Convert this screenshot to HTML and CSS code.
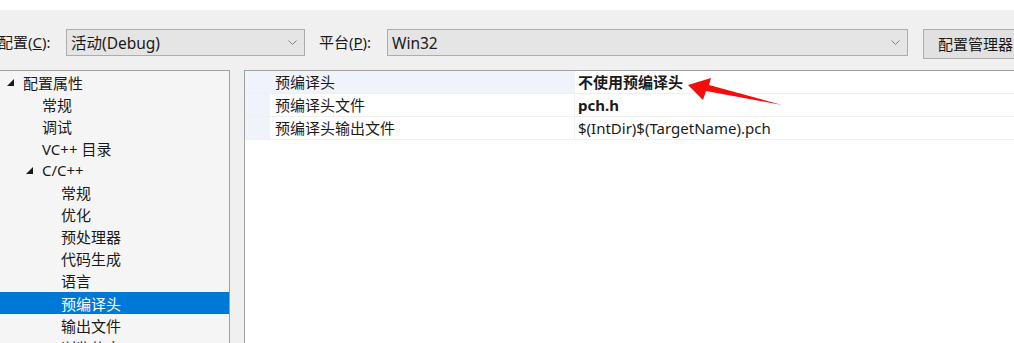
FILE: index.html
```html
<!DOCTYPE html>
<html>
<head>
    <title>属性页</title>
    <link rel="stylesheet" href="styles.css">
</head>
<body>
    <div class="page">
        <div class="top-strip"></div>

        <!-- 配置 / 平台 工具栏 -->
        <div class="toolbar">
            <span class="label label-config">配置(<u>C</u>):</span>
            <div class="combo combo-config">
                <span>活动(Debug)</span>
                <svg class="chevron" width="9" height="5" viewBox="0 0 9 5"><path d="M0.5 0.5 L4.5 4.5 L8.5 0.5" fill="none" stroke="#808080" stroke-width="1"/></svg>
            </div>
            <span class="label label-platform">平台(<u>P</u>):</span>
            <div class="combo combo-platform">
                <span>Win32</span>
                <svg class="chevron" width="9" height="5" viewBox="0 0 9 5"><path d="M0.5 0.5 L4.5 4.5 L8.5 0.5" fill="none" stroke="#808080" stroke-width="1"/></svg>
            </div>
            <div class="button">配置管理器</div>
        </div>

        <div class="main">
            <!-- 左侧树 -->
            <div class="tree">
                <div class="node level1"><span class="tri"></span>配置属性</div>
                <div class="node level2">常规</div>
                <div class="node level2">调试</div>
                <div class="node level2">VC++ 目录</div>
                <div class="node level2 open"><span class="tri"></span>C/C++</div>
                <div class="node level3">常规</div>
                <div class="node level3">优化</div>
                <div class="node level3">预处理器</div>
                <div class="node level3">代码生成</div>
                <div class="node level3">语言</div>
                <div class="node level3 selected">预编译头</div>
                <div class="node level3">输出文件</div>
                <div class="node level3">浏览信息</div>
            </div>

            <!-- 右侧属性表 -->
            <div class="grid">
                <div class="row active">
                    <div class="margin"></div>
                    <div class="name">预编译头</div>
                    <div class="value bold">不使用预编译头</div>
                </div>
                <div class="row">
                    <div class="margin"></div>
                    <div class="name">预编译头文件</div>
                    <div class="value bold">pch.h</div>
                </div>
                <div class="row">
                    <div class="margin"></div>
                    <div class="name">预编译头输出文件</div>
                    <div class="value">$(IntDir)$(TargetName).pch</div>
                </div>
            </div>
        </div>

        <!-- 红色箭头 -->
        <svg class="arrow" width="110" height="40" viewBox="680 72 110 40">
            <path d="M688 85 L711 78 L709 85 L782 105 L706 91 L703 100 Z" fill="#f50d0d"/>
        </svg>
    </div>
</body>
</html>
```

FILE: styles.css
```css
body {
    margin: 0;
    background: #ffffff;
    font-family: "Noto Sans", "Noto Sans CJK SC", sans-serif;
    font-size: 15px;
    color: #1a1a1a;
}

.page {
    position: relative;
    width: 1014px;
    height: 343px;
    overflow: hidden;
    background: #f0f0f0;
}

.top-strip {
    height: 10px;
    background: #ffffff;
}

.toolbar {
    display: flex;
    align-items: flex-start;
    height: 60px;
    padding-top: 19px;
    box-sizing: border-box;
    white-space: nowrap;
}

.toolbar > * {
    flex-shrink: 0;
}

.label {
    height: 27px;
    line-height: 27px;
}

.label-config {
    margin-left: -2px;
    width: 68px;
}

.label-platform {
    margin-left: 14px;
    width: 68px;
}

.combo {
    display: flex;
    align-items: center;
    justify-content: space-between;
    height: 27px;
    box-sizing: border-box;
    border: 1px solid #adadad;
    background: #e5e5e5;
    padding: 0 7px 0 4px;
    font-size: 15.5px;
}

.combo-config {
    width: 239px;
}

.combo-platform {
    width: 521px;
}

.chevron {
    display: block;
}

.button {
    margin-left: 15px;
    height: 30px;
    line-height: 28px;
    box-sizing: border-box;
    border: 1px solid #adadad;
    background: #e1e1e1;
    padding: 0 14px;
    width: 110px;
}

.main {
    display: flex;
    gap: 14px;
    height: 273px;
}

.tree {
    width: 230px;
    flex-shrink: 0;
    box-sizing: border-box;
    border-top: 1px solid #a0a0a0;
    border-right: 1px solid #a0a0a0;
    background: #f5f5f5;
    padding-top: 0;
}

.node {
    display: flex;
    align-items: center;
    height: 22px;
    white-space: nowrap;
}

.level1 {
    padding-left: 23px;
}

.level2 {
    padding-left: 42px;
}

.level3 {
    padding-left: 61px;
}

.tri {
    width: 0;
    height: 0;
    border-left: 7px solid transparent;
    border-bottom: 7px solid #1a1a1a;
    margin-left: -16px;
    margin-right: 9px;
}

.selected {
    background: #0078d7;
    color: #ffffff;
    margin-top: 1px;
}

.grid {
    flex: 1;
    border-top: 1px solid #a0a0a0;
    border-left: 1px solid #a0a0a0;
    background: #ffffff;
}

.row {
    display: flex;
    height: 23px;
    box-sizing: border-box;
    border-bottom: 1px solid #f0f0f0;
    white-space: nowrap;
}

.margin {
    width: 25px;
    background: #f0f4fa;
}

.name {
    width: 305px;
    padding-left: 5px;
    box-sizing: border-box;
    line-height: 22px;
    border-right: 1px solid #f0f0f0;
}

.active .name {
    background: #f0f4fa;
}

.value {
    flex: 1;
    padding-left: 3px;
    line-height: 22px;
}

.bold {
    font-weight: bold;
}

.arrow {
    position: absolute;
    left: 680px;
    top: 72px;
}
```
